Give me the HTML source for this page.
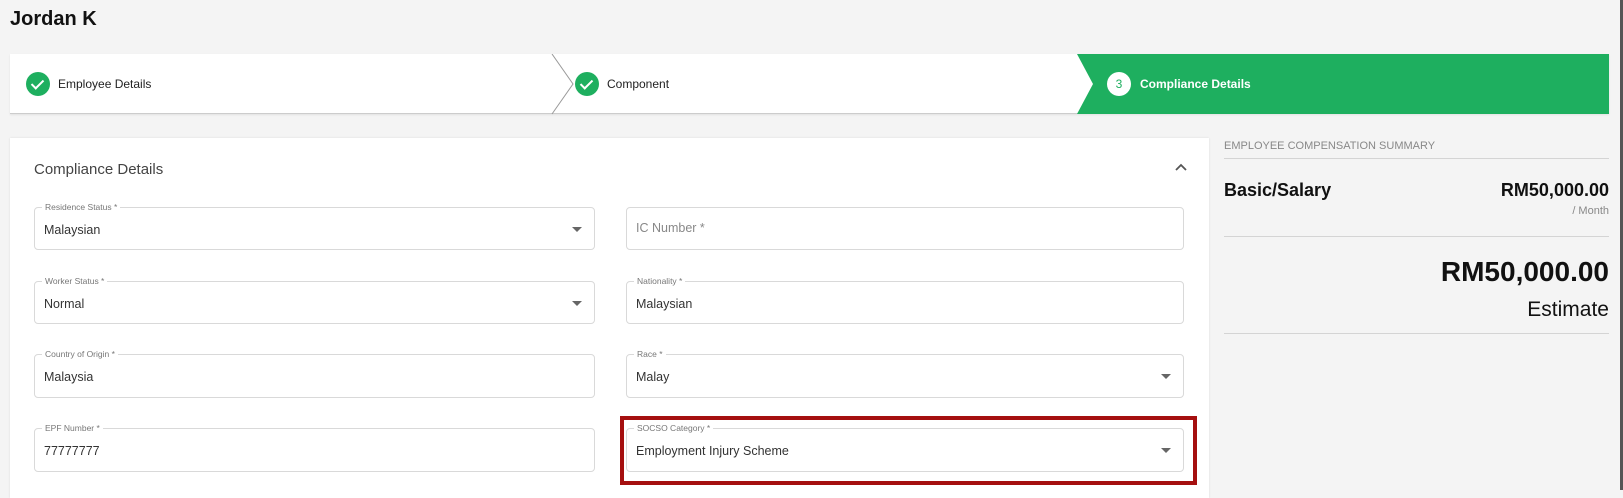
<!DOCTYPE html>
<html><head><style>
*{margin:0;padding:0;box-sizing:border-box}
body{width:1623px;height:490px;background:#f4f4f4;font-family:"Liberation Sans",Arial,sans-serif;position:relative;overflow:hidden;color:#222}
.a{position:absolute}
.fld{position:absolute;height:43px;border:1px solid #d9d9d9;border-radius:4px;background:#fff}
.lbl{position:absolute;top:-6px;left:7px;background:#fff;padding:0 3px;font-size:8.5px;color:#777;line-height:11px}
.val{position:absolute;left:9px;top:15px;font-size:12.5px;color:#333}
.arr{position:absolute;right:12px;top:19px;width:0;height:0;border-left:5px solid transparent;border-right:5px solid transparent;border-top:5px solid #666}
.ck{position:absolute;width:24px;height:24px;border-radius:50%;background:#1eaf5f}
.ck:after{content:"";position:absolute;left:8px;top:5px;width:5px;height:10px;border:solid #fff;border-width:0 2px 2px 0;transform:rotate(45deg)}
</style></head><body>
<div class="a" style="left:10px;top:8px;font-size:20px;font-weight:bold;color:#111">Jordan K</div>

<div class="a" style="left:10px;top:54px;width:1599px;height:60px;background:#fff;border-bottom:1px solid #ccc;box-shadow:0 1px 2px rgba(0,0,0,.08)"></div>
<svg class="a" style="left:540px;top:54px" width="40" height="61"><polyline points="12,0 33,30 12,60" fill="none" stroke="#999" stroke-width="1"/></svg>
<div class="ck" style="left:26px;top:72px"></div>
<div class="a" style="left:58px;top:77px;font-size:12px">Employee Details</div>
<div class="ck" style="left:575px;top:72px"></div>
<div class="a" style="left:607px;top:77px;font-size:12px">Component</div>
<svg class="a" style="left:1077px;top:54px" width="532" height="60"><polygon points="0,0 532,0 532,60 0,60 16,30" fill="#1eaf5f"/></svg>
<div class="a" style="left:1107px;top:72px;width:24px;height:24px;border-radius:50%;background:#fff;color:#1eaf5f;font-size:12px;text-align:center;line-height:24px">3</div>
<div class="a" style="left:1140px;top:77px;font-size:12px;color:#fff;font-weight:bold">Compliance Details</div>

<div class="a" style="left:10px;top:138px;width:1199px;height:360px;background:#fff;box-shadow:0 0 2px rgba(0,0,0,.1)"></div>
<div class="a" style="left:34px;top:161px;font-size:15px;color:#444">Compliance Details</div>
<svg class="a" style="left:1174px;top:162px" width="14" height="10"><polyline points="2,8 7,3 12,8" fill="none" stroke="#555" stroke-width="1.8"/></svg>

<div class="fld" style="left:34px;top:207px;width:561px"><div class="lbl">Residence Status *</div><div class="val">Malaysian</div><div class="arr"></div></div>
<div class="fld" style="left:626px;top:207px;width:558px"><div class="val" style="top:13px;color:#888">IC Number *</div></div>
<div class="fld" style="left:34px;top:281px;width:561px"><div class="lbl">Worker Status *</div><div class="val">Normal</div><div class="arr"></div></div>
<div class="fld" style="left:626px;top:281px;width:558px"><div class="lbl">Nationality *</div><div class="val">Malaysian</div></div>
<div class="fld" style="left:34px;top:354px;width:561px;height:44px"><div class="lbl">Country of Origin *</div><div class="val">Malaysia</div></div>
<div class="fld" style="left:626px;top:354px;width:558px;height:44px"><div class="lbl">Race *</div><div class="val">Malay</div><div class="arr"></div></div>
<div class="fld" style="left:34px;top:428px;width:561px;height:44px"><div class="lbl">EPF Number *</div><div class="val">77777777</div></div>
<div class="fld" style="left:626px;top:428px;width:558px;height:44px"><div class="lbl">SOCSO Category *</div><div class="val">Employment Injury Scheme</div><div class="arr"></div></div>
<div class="a" style="left:620px;top:416px;width:577px;height:69px;border:4px solid #a50f0f"></div>

<div class="a" style="left:1224px;top:140px;font-size:11px;color:#888">EMPLOYEE COMPENSATION SUMMARY</div>
<div class="a" style="left:1224px;top:158px;width:385px;border-top:1px solid #d4d4d4"></div>
<div class="a" style="left:1224px;top:180px;font-size:18px;font-weight:bold;color:#111">Basic/Salary</div>
<div class="a" style="right:14px;top:180px;font-size:18px;font-weight:bold;color:#111">RM50,000.00</div>
<div class="a" style="right:14px;top:205px;font-size:11px;color:#888">/ Month</div>
<div class="a" style="left:1224px;top:236px;width:385px;border-top:1px solid #d4d4d4"></div>
<div class="a" style="right:14px;top:256px;font-size:28px;font-weight:bold;color:#111">RM50,000.00</div>
<div class="a" style="right:14px;top:298px;font-size:21px;color:#111">Estimate</div>
<div class="a" style="left:1224px;top:333px;width:385px;border-top:1px solid #d4d4d4"></div>

<div class="a" style="left:1620px;top:0;width:3px;height:490px;background:#555"></div>
</body></html>
